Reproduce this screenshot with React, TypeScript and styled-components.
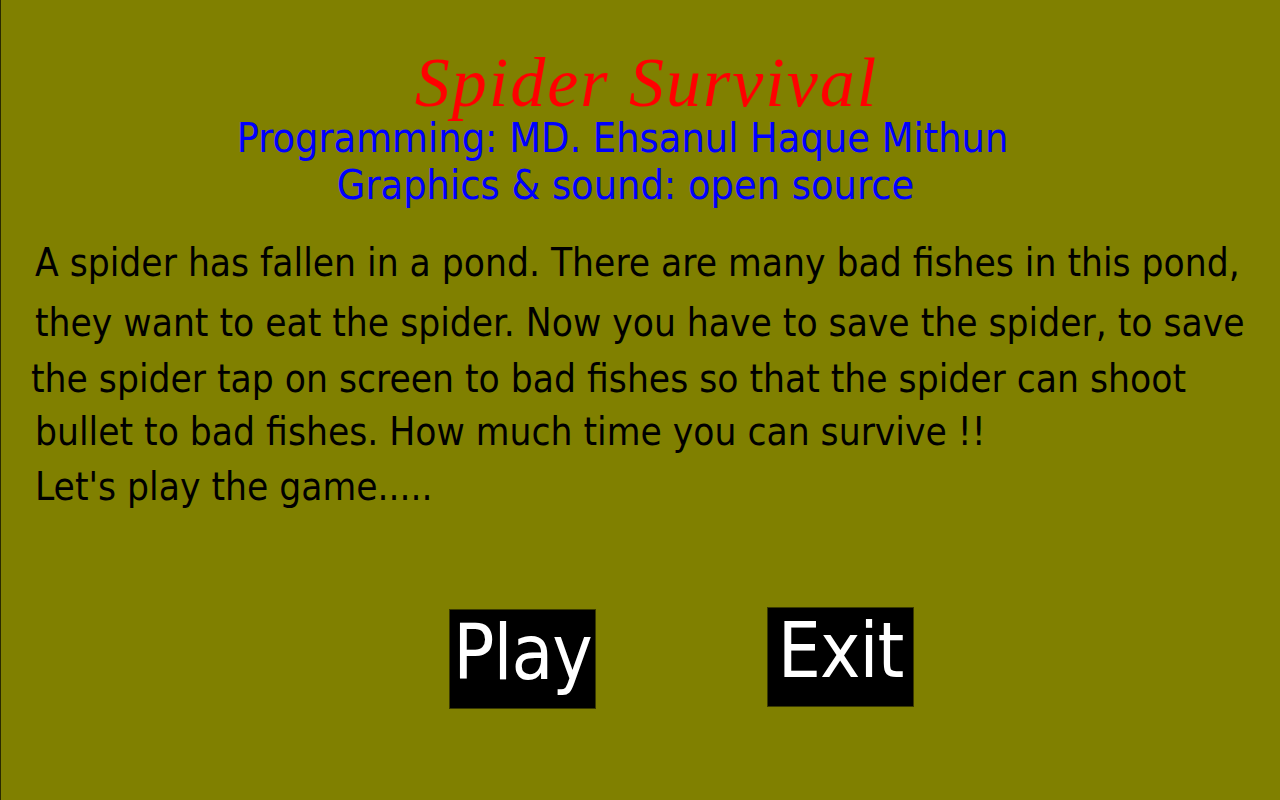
import React from 'react';
import styled, { createGlobalStyle } from 'styled-components';

const GlobalStyle = createGlobalStyle`
  html, body {
    margin: 0;
    padding: 0;
    background: #808000;
  }
`;

const Screen = styled.div`
  width: 1280px;
  height: 800px;
  box-sizing: border-box;
  background: #808000;
  border-left: 1px solid #2a2a00;
  display: flex;
  flex-direction: column;
  font-family: 'DejaVu Sans Condensed', 'DejaVu Sans', sans-serif;
  overflow: hidden;
`;

const Header = styled.div`
  display: flex;
  flex-direction: column;
  align-items: center;
  padding-top: 51px;
`;

const Title = styled.h1`
  margin: 0 0 0 12px;
  font-family: 'Liberation Serif', serif;
  font-style: italic;
  font-weight: normal;
  font-size: 70px;
  line-height: 64px;
  letter-spacing: 2px;
  color: #ff0000;
`;

const Credit = styled.div<{ offset: number }>`
  color: #0000ff;
  font-size: 41px;
  line-height: 47px;
  padding-right: ${p => p.offset}px;
`;

const Story = styled.div`
  display: flex;
  flex-direction: column;
  padding: 30px 0 0 34px;
  color: #000;
  font-size: 38.5px;
`;

const StoryLine = styled.div<{ gap: number; shift?: number }>`
  margin-top: ${p => p.gap}px;
  margin-left: ${p => p.shift || 0}px;
  line-height: 48px;
  white-space: nowrap;
`;

const Actions = styled.div`
  display: flex;
  justify-content: center;
  align-items: center;
  gap: 171px;
  margin-top: 98px;
  padding-left: 82px;
`;

const GameButton = styled.button<{ lift?: number }>`
  width: 147px;
  height: 100px;
  box-sizing: border-box;
  background: #000;
  color: #fff;
  border: 1px solid #3a3a00;
  font-family: 'DejaVu Sans Condensed', 'DejaVu Sans', sans-serif;
  font-size: 76px;
  letter-spacing: -1px;
  line-height: 1;
  padding: 0 0 12px;
  cursor: pointer;
  transform: translateY(${p => -(p.lift || 0)}px);
`;

const lines = [
  { text: 'A spider has fallen in a pond. There are many bad fishes in this pond,', gap: 0 },
  { text: 'they want to eat the spider. Now you have to save the spider, to save', gap: 12 },
  { text: 'the spider tap on screen to bad fishes so that the spider can shoot', gap: 8, shift: -4 },
  { text: 'bullet to bad fishes. How much time you can survive !!', gap: 5 },
  { text: "Let's play the game.....", gap: 7 },
];

const App: React.FC = () => {
  return (
    <Screen>
      <GlobalStyle />
      <Header>
        <Title>Spider Survival</Title>
        <Credit offset={36}>Programming: MD. Ehsanul Haque Mithun</Credit>
        <Credit offset={30}>Graphics &amp; sound: open source</Credit>
      </Header>
      <Story>
        {lines.map(line => (
          <StoryLine key={line.text} gap={line.gap} shift={line.shift}>
            {line.text}
          </StoryLine>
        ))}
      </Story>
      <Actions>
        <GameButton>Play</GameButton>
        <GameButton lift={2}>Exit</GameButton>
      </Actions>
    </Screen>
  );
};

export default App;
